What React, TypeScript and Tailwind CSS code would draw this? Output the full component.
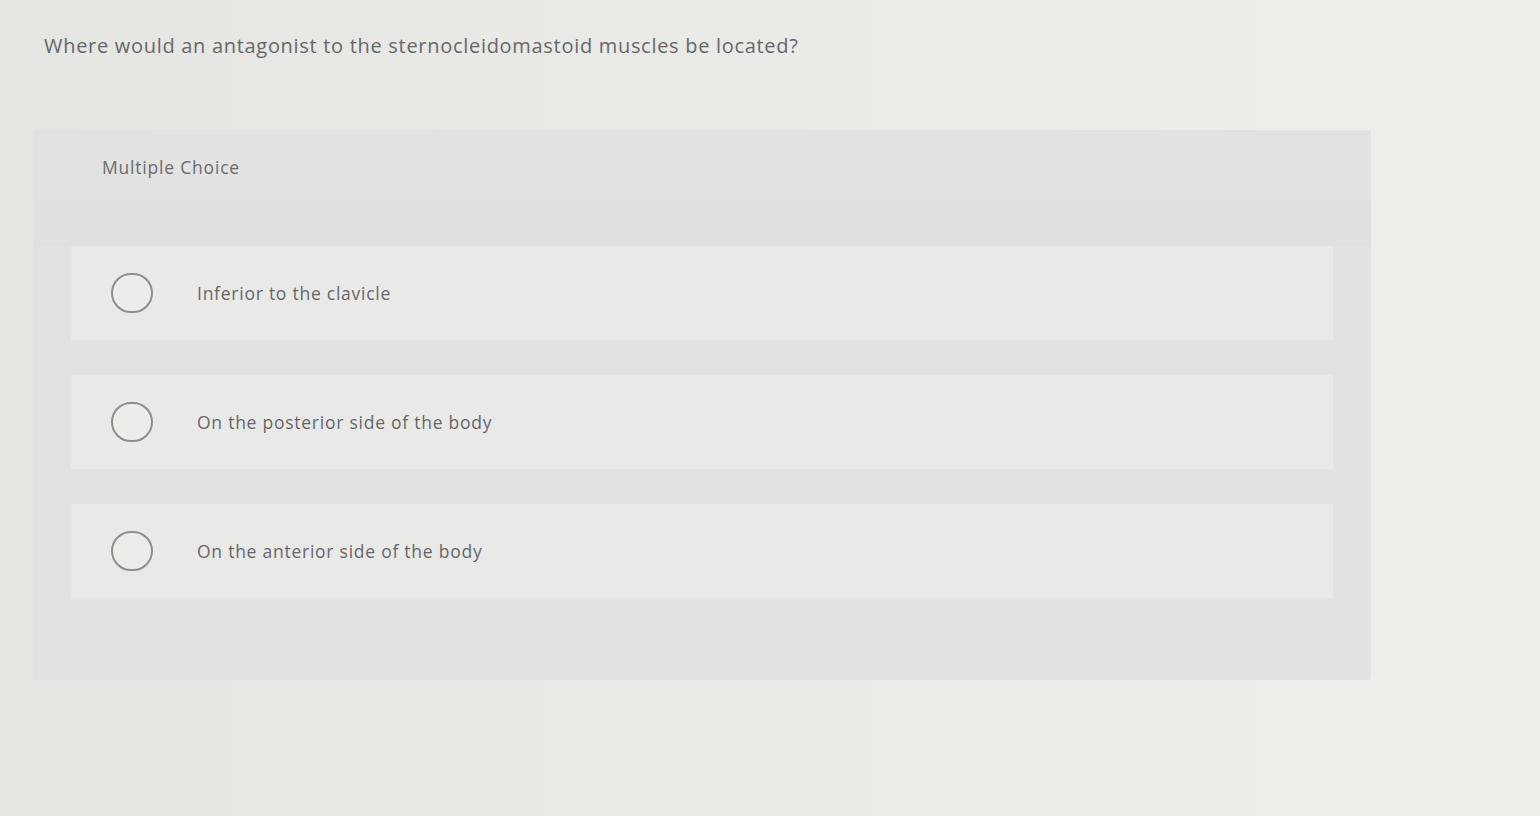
import React from 'react';

const options = [
  'Inferior to the clavicle',
  'On the posterior side of the body',
  'On the anterior side of the body',
];

const Radio: React.FC = () => (
  <span className="block w-[42px] h-[40px] shrink-0 rounded-full border-2 border-[#8d8d92] bg-[#ececeb]" />
);

export default function App() {
  return (
    <div
      className="w-[1540px] h-[816px] overflow-hidden bg-gradient-to-r from-[#e5e5e2] via-[#eaeae7] to-[#efeeea] text-[#67676b]"
      style={{ fontFamily: '"Open Sans", Lato, sans-serif' }}
    >
      <div className="pt-[33px] pl-[44px] text-[20px] leading-[26px] tracking-[0.7px]">
        Where would an antagonist to the sternocleidomastoid muscles be located?
      </div>

      <div className="mt-[71px] ml-[33px] w-[1338px] h-[550px] bg-[#e2e3e1] rounded-[3px] flex flex-col">
        <div className="h-[70px] pt-[25px] pl-[69px] text-[17.5px] leading-[24px] tracking-[0.8px] text-[#6b6b6f]">
          Multiple Choice
        </div>
        <div className="h-[46px] bg-[#e0e1df]" />
        <div className="flex flex-col gap-[35px] px-[38px]">
          {options.map((o) => (
            <div key={o} className="h-[94px] bg-[#e9eae8] flex items-center pl-[40px] gap-[44px]">
              <Radio />
              <span className="text-[17.5px] leading-[24px] tracking-[0.75px] text-[#66666a]">{o}</span>
            </div>
          ))}
        </div>
      </div>
    </div>
  );
}
